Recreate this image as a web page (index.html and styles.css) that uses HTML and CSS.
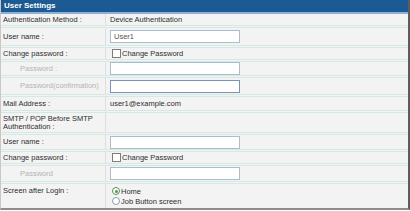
FILE: index.html
```html
<!DOCTYPE html>
<html lang="en">
<head>
    <meta charset="UTF-8">
    <title>User Settings</title>
    <link rel="stylesheet" href="styles.css">
</head>
<body>
    <div id="settings">
        <div class="title">User Settings</div>

        <div class="row h14">
            <div class="label">Authentication Method :</div>
            <div class="value">Device Authentication</div>
        </div>
        <div class="row h20">
            <div class="label">User name :</div>
            <div class="value"><input type="text" class="field" value="User1"></div>
        </div>
        <div class="row h14">
            <div class="label">Change password :</div>
            <div class="value"><span class="check"></span>Change Password</div>
        </div>
        <div class="row h16">
            <div class="label sub">Password :</div>
            <div class="value"><input type="password" class="field"></div>
        </div>
        <div class="row h19">
            <div class="label sub">Password(confirmation)</div>
            <div class="value"><input type="password" class="field focus"></div>
        </div>
        <div class="row h16">
            <div class="label">Mail Address :</div>
            <div class="value">user1@example.com</div>
        </div>
        <div class="row h22">
            <div class="label">SMTP / POP Before SMTP<br>Authentication :</div>
            <div class="value"></div>
        </div>
        <div class="row h17">
            <div class="label">User name :</div>
            <div class="value"><input type="text" class="field"></div>
        </div>
        <div class="row h14">
            <div class="label">Change password :</div>
            <div class="value"><span class="check"></span>Change Password</div>
        </div>
        <div class="row h18">
            <div class="label sub">Password</div>
            <div class="value"><input type="password" class="field"></div>
        </div>
        <div class="row last">
            <div class="label top">Screen after Login :</div>
            <div class="value radios">
                <div class="opt"><span class="radio on"></span>Home</div>
                <div class="opt"><span class="radio"></span>Job Button screen</div>
            </div>
        </div>
    </div>
</body>
</html>
```

FILE: styles.css
```css
body {
    margin: 0;
    font-family: "Liberation Sans", Arial, sans-serif;
    font-size: 7.5px;
    color: #2e2e2e;
    background: #fff;
}

#settings {
    width: 410px;
    box-sizing: border-box;
    background-color: #f3f3f3;
    border-left: 1px solid #c8c8c8;
    border-right: 2px solid #5c5c5c;
    border-bottom: 2px solid #8c8c8c;
}

.title {
    height: 12px;
    line-height: 12px;
    padding-left: 3px;
    background-color: #1c5a94;
    border-bottom: 2px solid #8db0d4;
    color: #fff;
    font-weight: bold;
    font-size: 8px;
}

.row {
    display: flex;
    box-sizing: border-box;
    border-bottom: 3px double #d3e9e2;
}

.h14 { height: 14px; }
.h16 { height: 16px; }
.h17 { height: 17px; }
.h18 { height: 18px; }
.h19 { height: 19px; }
.h20 { height: 20px; }
.h22 { height: 22px; }

.row.last {
    height: 24px;
    border-bottom: none;
}

.label {
    width: 102px;
    padding-left: 2px;
    border-right: 1px solid #dedede;
    display: flex;
    align-items: center;
    line-height: 8px;
}

.label.sub {
    padding-left: 19px;
    width: 85px;
    color: #b4b4b4;
}

.label.top {
    align-items: flex-start;
    padding-top: 3px;
}

.value {
    flex: 1;
    display: flex;
    align-items: center;
    padding-left: 4px;
}

.field {
    width: 130px;
    height: 13px;
    box-sizing: border-box;
    margin: 0;
    padding: 0 3px;
    border: 1px solid #aabccd;
    background: #fff;
    font-family: "Liberation Sans", Arial, sans-serif;
    font-size: 7.5px;
    color: #555;
}

.field.focus {
    border-color: #7a93b4;
}

.check {
    display: inline-block;
    width: 7px;
    height: 7px;
    margin: 0 1px 0 2px;
    border: 1px solid #7c7c7c;
    background: #fff;
}

.radios {
    flex-direction: column;
    align-items: flex-start;
    justify-content: center;
}

.opt {
    display: flex;
    align-items: center;
    height: 10px;
}

.radio {
    display: inline-block;
    width: 6px;
    height: 6px;
    margin: 0 1px 0 2px;
    border: 1px solid #8a9bb0;
    border-radius: 50%;
    background: #fff;
    position: relative;
}

.radio.on {
    border-color: #5d8a5d;
}

.radio.on::after {
    content: "";
    position: absolute;
    left: 1.5px;
    top: 1.5px;
    width: 3px;
    height: 3px;
    border-radius: 50%;
    background: #3aa23a;
}
```
